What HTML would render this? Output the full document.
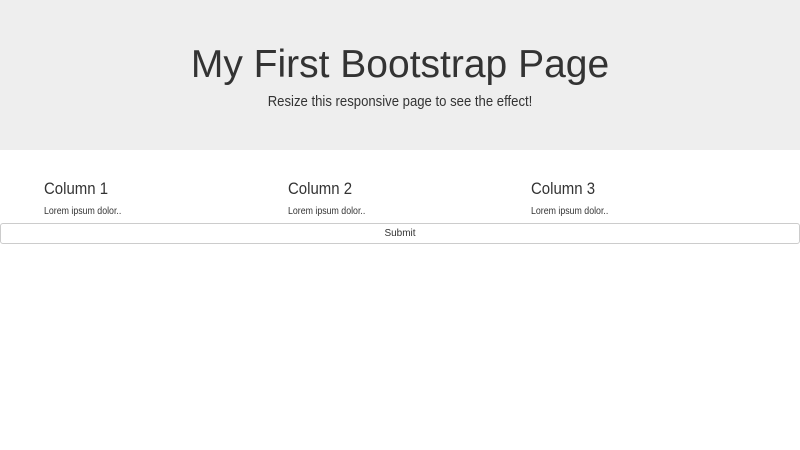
<!DOCTYPE html>
<html><head><meta charset="utf-8"><style>
*{margin:0;padding:0;box-sizing:border-box}
body{width:800px;height:450px;background:#fff;font-family:"Liberation Sans",Arial,sans-serif;color:#333;position:relative;overflow:hidden}
.jumbo{position:absolute;left:0;top:0;width:800px;height:150px;background:#eee}
h1{position:absolute;left:0;width:800px;top:41px;text-align:center;font-size:39px;font-weight:normal;line-height:48px}
.sub{position:absolute;left:0;width:800px;top:93px;text-align:center;font-size:15px;line-height:18px;transform:scaleX(0.875)}
.col{position:absolute;top:179px;transform:scaleX(0.88);transform-origin:0 0;white-space:nowrap}
.col h3{font-size:17px;font-weight:normal;line-height:20px}
.col p{font-size:10px;margin-top:7px;line-height:12px}
.btn{position:absolute;left:0;top:223px;width:800px;height:21px;border:1px solid #ccc;border-radius:3px;background:#fff;text-align:center;font-size:10px;line-height:19px}
</style></head><body>
<div class="jumbo"><h1>My First Bootstrap Page</h1><div class="sub">Resize this responsive page to see the effect!</div></div>
<div class="col" style="left:44px"><h3>Column 1</h3><p>Lorem ipsum dolor..</p></div>
<div class="col" style="left:288px"><h3>Column 2</h3><p>Lorem ipsum dolor..</p></div>
<div class="col" style="left:531px"><h3>Column 3</h3><p>Lorem ipsum dolor..</p></div>
<div class="btn">Submit</div>
</body></html>
